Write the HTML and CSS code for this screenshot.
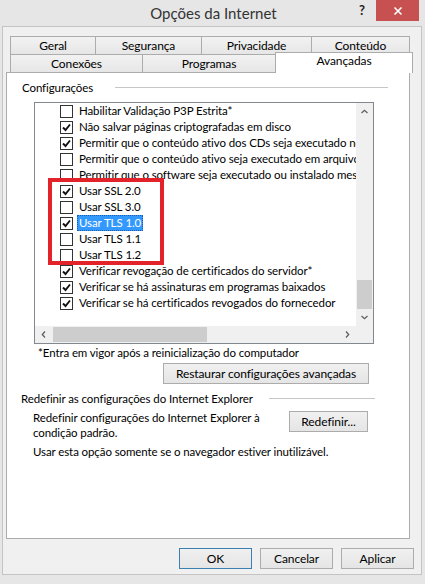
FILE: index.html
```html
<!DOCTYPE html>
<html lang="pt-BR">
<head>
    <meta charset="UTF-8">
    <title>Opções da Internet</title>
    <link rel="stylesheet" href="styles.css">
</head>
<body>
    <div class="window">

        <!-- Title bar -->
        <div class="titlebar">
            <div></div>
            <div class="title">Opções da Internet</div>
            <div class="controls">
                <span class="help">?</span>
                <span class="close">
                    <svg width="10" height="10" viewBox="0 0 10 10"><path d="M1.5 1.5 L8.5 8.5 M8.5 1.5 L1.5 8.5" stroke="#fff" stroke-width="1.6"/></svg>
                </span>
            </div>
        </div>

        <div class="client">
            <!-- Tabs -->
            <div class="tabs">
                <div class="tab-row">
                    <div class="tab" style="width:86px">Geral</div>
                    <div class="tab" style="width:107px">Segurança</div>
                    <div class="tab" style="width:111px">Privacidade</div>
                    <div class="tab" style="width:99px">Conteúdo</div>
                </div>
                <div class="tab-row">
                    <div class="tab" style="width:133px">Conexões</div>
                    <div class="tab" style="width:134px">Programas</div>
                    <div class="tab active" style="width:138px">Avançadas</div>
                </div>
            </div>

            <div class="panel">
                <div class="group-head head-config"><span>Configurações</span></div>

                <div class="listbox">
                    <div class="list-area">
                        <div class="items">
                            <div class="item"><span class="cb"></span><span class="txt">Habilitar Validação P3P Estrita*</span></div>
                            <div class="item"><span class="cb"><svg viewBox="0 0 11 11"><path d="M2 5.5 L4.5 8 L9 2.5"/></svg></span><span class="txt">Não salvar páginas criptografadas em disco</span></div>
                            <div class="item"><span class="cb"><svg viewBox="0 0 11 11"><path d="M2 5.5 L4.5 8 L9 2.5"/></svg></span><span class="txt">Permitir que o conteúdo ativo dos CDs seja executado no Meu Computador*</span></div>
                            <div class="item"><span class="cb"></span><span class="txt">Permitir que o conteúdo ativo seja executado em arquivos no Meu Computador*</span></div>
                            <div class="item"><span class="cb"></span><span class="txt">Permitir que o software seja executado ou instalado mesmo que a assinatura seja inválida</span></div>
                            <div class="item"><span class="cb"><svg viewBox="0 0 11 11"><path d="M2 5.5 L4.5 8 L9 2.5"/></svg></span><span class="txt">Usar SSL 2.0</span></div>
                            <div class="item"><span class="cb"></span><span class="txt">Usar SSL 3.0</span></div>
                            <div class="item"><span class="cb"><svg viewBox="0 0 11 11"><path d="M2 5.5 L4.5 8 L9 2.5"/></svg></span><span class="txt selected">Usar TLS 1.0</span></div>
                            <div class="item"><span class="cb"></span><span class="txt">Usar TLS 1.1</span></div>
                            <div class="item"><span class="cb"></span><span class="txt">Usar TLS 1.2</span></div>
                            <div class="item"><span class="cb"><svg viewBox="0 0 11 11"><path d="M2 5.5 L4.5 8 L9 2.5"/></svg></span><span class="txt">Verificar revogação de certificados do servidor*</span></div>
                            <div class="item"><span class="cb"><svg viewBox="0 0 11 11"><path d="M2 5.5 L4.5 8 L9 2.5"/></svg></span><span class="txt">Verificar se há assinaturas em programas baixados</span></div>
                            <div class="item"><span class="cb"><svg viewBox="0 0 11 11"><path d="M2 5.5 L4.5 8 L9 2.5"/></svg></span><span class="txt">Verificar se há certificados revogados do fornecedor</span></div>
                        </div>
                        <div class="vscroll">
                            <span class="arrow"><svg viewBox="0 0 7 4"><path d="M0.5 3.5 L3.5 0.8 L6.5 3.5"/></svg></span>
                            <span class="track"></span>
                            <span class="thumb"></span>
                            <span class="arrow"><svg viewBox="0 0 7 4"><path d="M0.5 0.5 L3.5 3.2 L6.5 0.5"/></svg></span>
                        </div>
                    </div>
                    <div class="hscroll">
                        <span class="arrow"><svg viewBox="0 0 4 7"><path d="M3.5 0.5 L0.8 3.5 L3.5 6.5"/></svg></span>
                        <span class="track"><span class="thumb"></span></span>
                        <span class="arrow"><svg viewBox="0 0 4 7"><path d="M0.5 0.5 L3.2 3.5 L0.5 6.5"/></svg></span>
                        <span class="corner"></span>
                    </div>

                    <!-- annotation drawn over the list -->
                    <div class="mark"></div>
                </div>

                <div class="note">*Entra em vigor após a reinicialização do computador</div>
                <div class="restore-row">
                    <button class="btn restore">Restaurar configurações avançadas</button>
                </div>

                <div class="group-head head-reset"><span>Redefinir as configurações do Internet Explorer</span></div>
                <div class="reset-row">
                    <div class="reset-text">Redefinir configurações do Internet Explorer à<br>condição padrão.</div>
                    <button class="btn reset">Redefinir...</button>
                </div>
                <div class="reset-hint">Usar esta opção somente se o navegador estiver inutilizável.</div>
            </div>

            <div class="footer">
                <button class="btn default">OK</button>
                <button class="btn">Cancelar</button>
                <button class="btn">Aplicar</button>
            </div>
        </div>
    </div>
</body>
</html>
```

FILE: styles.css
```css
body {
    margin: 0;
    padding: 0;
    background: #e6e6e6;
    font-family: Lato, "Open Sans", sans-serif;
    font-size: 11.5px;
    letter-spacing: -0.1px;
    color: #000;
}

.window {
    width: 425px;
    height: 584px;
    display: flex;
    flex-direction: column;
}

/* Title bar */
.titlebar {
    height: 26px;
    display: grid;
    grid-template-columns: 1fr auto 1fr;
    align-items: start;
}

.title {
    font-size: 15px;
    letter-spacing: 0;
    color: #333;
    padding-top: 4px;
    padding-left: 2px;
}

.controls {
    display: flex;
    justify-content: flex-end;
    padding-right: 6px;
}

.help {
    font-weight: bold;
    font-size: 13px;
    color: #222;
    padding-top: 2px;
    margin-right: 11px;
}

.close {
    width: 43px;
    height: 21px;
    background: #c75050;
    display: flex;
    align-items: center;
    justify-content: center;
}

/* Client area */
.client {
    margin: 0 3px 0 2px;
    height: 549px;
    border: 1px solid #c4c4c4;
    background: #f0f0f0;
    padding: 9px 9px 0 5px;
    box-sizing: border-box;
}

.tabs {
    margin-left: 2px;
}

.tab-row {
    display: flex;
    height: 18px;
}

.tab {
    box-sizing: border-box;
    border: 1px solid #acacac;
    border-bottom: none;
    margin-left: -1px;
    background: linear-gradient(to bottom, #f2f2f2, #e6e6e6);
    text-align: center;
    line-height: 17px;
    font-size: 12px;
}

.tab-row .tab:first-child {
    margin-left: 0;
}

.tab.active {
    background: #fff;
    height: 21px;
    margin-top: -2px;
    margin-right: -1px;
    position: relative;
    z-index: 1;
    line-height: 16px;
}

.panel {
    margin-left: -2px;
    width: 404px;
    height: 467px;
    box-sizing: border-box;
    background: #fff;
    border: 1px solid #acacac;
    display: flex;
    flex-direction: column;
}

.group-head {
    display: flex;
    align-items: center;
    height: 15px;
}

.group-head::after {
    content: '';
    flex: 1;
    border-top: 1px solid #c6c6c6;
    margin-left: 9px;
}

.head-config {
    margin: 7px 21px 0 15px;
}

.head-config::after {
    margin-left: 22px;
}

.head-reset {
    margin: 7px 34px 0 14px;
}

.head-reset::after {
    margin-left: 16px;
}

/* List box with checkboxes */
.listbox {
    position: relative;
    margin: 7px 0 0 27px;
    width: 340px;
    height: 242px;
    box-sizing: border-box;
    border: 1px solid #828790;
    display: flex;
    flex-direction: column;
}

.list-area {
    flex: 1;
    display: flex;
    min-height: 0;
}

.items {
    flex: 1;
    overflow: hidden;
}

.item {
    height: 16px;
    display: flex;
    align-items: center;
    padding-left: 25px;
    white-space: nowrap;
}

.cb {
    flex: none;
    width: 13px;
    height: 13px;
    box-sizing: border-box;
    border: 1px solid #333;
    background: #fff;
    margin-right: 4px;
    display: flex;
}

.cb svg {
    width: 11px;
    height: 11px;
}

.cb path {
    fill: none;
    stroke: #111;
    stroke-width: 1.9;
}

.txt {
    padding: 0 1px;
    line-height: 14px;
    border: 1px dotted transparent;
}

.txt.selected {
    background: #3399ff;
    color: #fff;
    border-color: #1a5fa8;
}

.vscroll {
    width: 17px;
    background: #f0f0f0;
    display: flex;
    flex-direction: column;
}

.vscroll .track {
    flex: 1;
}

.vscroll .thumb {
    height: 29px;
    background: #cdcdcd;
    margin: 0 1px;
}

.arrow {
    flex: none;
    width: 17px;
    height: 17px;
    display: flex;
    align-items: center;
    justify-content: center;
}

.arrow svg {
    width: 7px;
    height: 7px;
}

.arrow path {
    fill: none;
    stroke: #606060;
    stroke-width: 1.3;
}

.hscroll {
    height: 17px;
    display: flex;
    background: #f0f0f0;
}

.hscroll .track {
    flex: 1;
    display: flex;
    align-items: center;
}

.hscroll .thumb {
    width: 154px;
    height: 15px;
    margin-left: 1px;
    background: #cdcdcd;
}

.corner {
    width: 17px;
    background: #f0f0f0;
}

.mark {
    position: absolute;
    left: 13px;
    top: 75px;
    width: 116px;
    height: 87px;
    box-sizing: border-box;
    border: 4px solid #e3232a;
}

.note {
    margin: 1px 0 0 31px;
    line-height: 15px;
}

.restore-row {
    display: flex;
    justify-content: flex-end;
    margin: 3px 40px 0 0;
}

/* Buttons */
.btn {
    font-family: inherit;
    font-size: 12px;
    letter-spacing: -0.1px;
    color: #000;
    background: linear-gradient(to bottom, #f0f0f0, #e5e5e5);
    border: 1px solid #acacac;
    padding: 0;
    height: 21px;
}

.restore {
    width: 206px;
}

.reset-row {
    display: flex;
    justify-content: space-between;
    align-items: flex-start;
    margin: 4px 41px 0 26px;
}

.reset-text {
    line-height: 15px;
}

.reset {
    width: 79px;
    margin-top: 1px;
}

.reset-hint {
    margin: 4px 0 0 26px;
    line-height: 15px;
}

.footer {
    display: flex;
    justify-content: flex-end;
    gap: 8px;
    margin: 9px -2px 0 0;
}

.footer .btn {
    width: 73px;
}

.footer .btn.default {
    border-color: #3c7fb1;
}
```
